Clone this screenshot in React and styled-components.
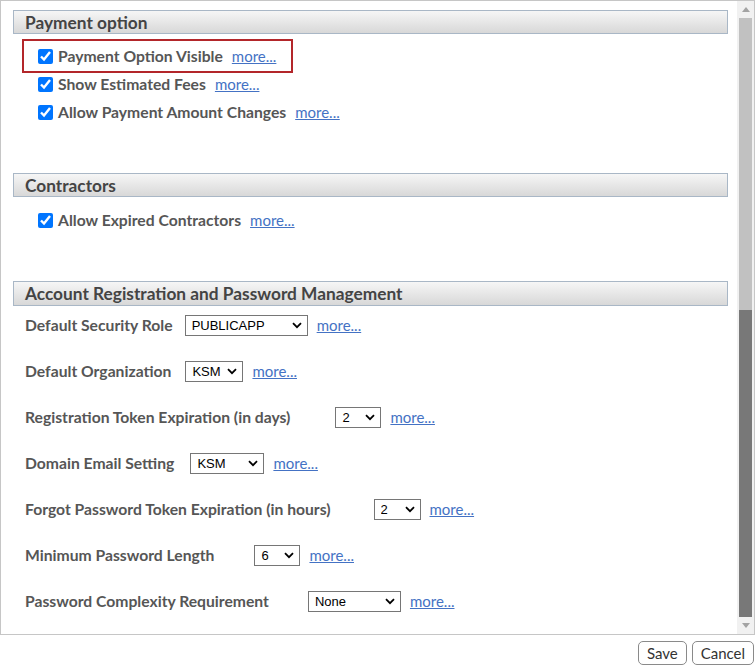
import React from "react";
import styled, { createGlobalStyle } from "styled-components";

const Global = createGlobalStyle`
    html, body {
        margin: 0;
        padding: 0;
        background: #fff;
        font-family: Lato, "Open Sans", sans-serif;
    }
`;

const Page = styled.div`
    width: 755px;
    height: 665px;
    display: flex;
    flex-direction: column;
`;

const Frame = styled.div`
    height: 635px;
    box-sizing: border-box;
    border: 1px solid #c6c6c6;
    display: flex;
    flex-direction: row;
    overflow: hidden;
`;

const Content = styled.div`
    flex: 1;
    padding: 9px 9px 0 12px;
`;

const Section = styled.div`
    margin-bottom: ${(p) => p.gapAfter || 0}px;
`;

const Header = styled.div`
    height: ${(p) => p.h || 24}px;
    box-sizing: border-box;
    border: 1px solid #a9b7c6;
    background: linear-gradient(#f6f6f6, #d8d8d8);
    color: #444;
    font-weight: 700;
    font-size: 17.3px;
    display: flex;
    align-items: center;
    padding-left: 11px;
`;

const CheckList = styled.div`
    padding-top: ${(p) => p.top}px;
    display: flex;
    flex-direction: column;
`;

const CheckRow = styled.div`
    height: 28px;
    display: flex;
    align-items: center;
    padding-left: 25px;
`;

const HighlightRow = styled(CheckRow)`
    box-sizing: border-box;
    height: 34px;
    width: fit-content;
    border: 2px solid #b3262a;
    margin: -3px 0 -3px 9px;
    padding: 0 15px 0 14px;
`;

const Box = styled.input`
    width: 15px;
    height: 15px;
    margin: 0 5px 0 0;
    accent-color: #0075ff;
`;

const Label = styled.span`
    font-size: 15.7px;
    font-weight: 700;
    color: #565656;
`;

const More = styled.a`
    font-size: 15px;
    color: #4472c4;
    text-decoration: underline;
    margin-left: 9px;
    cursor: pointer;
`;

const FieldList = styled.div`
    padding-top: 5px;
    display: flex;
    flex-direction: column;
    gap: 18px;
`;

const FieldRow = styled.div`
    height: 28px;
    display: flex;
    align-items: center;
    padding-left: 12px;
`;

const SelectWrap = styled.span`
    position: relative;
    display: inline-flex;
    margin-left: ${(p) => p.offset}px;
`;

const Select = styled.select`
    appearance: none;
    width: ${(p) => p.w}px;
    height: 21px;
    box-sizing: border-box;
    border: 1px solid #767676;
    border-radius: 0;
    background: #fff;
    font-family: "Liberation Sans", Arial, sans-serif;
    font-size: 13px;
    color: #000;
    padding: 0 0 0 6px;
    outline: none;
`;

const Chevron = styled.svg`
    position: absolute;
    right: 6px;
    top: 7px;
    pointer-events: none;
`;

const Scrollbar = styled.div`
    width: 17px;
    background: #f1f1f1;
    display: flex;
    flex-direction: column;
    align-items: center;
`;

const Arrow = styled.div`
    height: 17px;
    display: flex;
    align-items: center;
    justify-content: center;
`;

const Groove = styled.div`
    flex: 1;
    width: 13px;
    display: flex;
    flex-direction: column;
`;

const GrooveTrack = styled.div`
    height: 292px;
    background: #c1c1c1;
`;

const Thumb = styled.div`
    flex: 1;
    background: #787878;
`;

const Footer = styled.div`
    flex: 1;
    display: flex;
    justify-content: flex-end;
    align-items: flex-start;
    gap: 5px;
    padding: 6px 1px 0 0;
`;

const Button = styled.button`
    height: 24px;
    padding: 0 8px;
    border: 1px solid #8a8a8a;
    border-radius: 5px;
    background: #fff;
    color: #333;
    font-family: Lato, "Open Sans", sans-serif;
    font-size: 15px;
`;

const Check = ({ label, highlight }) => {
    const Row = highlight ? HighlightRow : CheckRow;
    return (
        <Row>
            <Box type="checkbox" defaultChecked />
            <Label>{label}</Label>
            <More>more...</More>
        </Row>
    );
};

const Field = ({ label, offset, width, value }) => (
    <FieldRow>
        <Label>{label}</Label>
        <SelectWrap offset={offset}>
            <Select w={width} defaultValue={value}>
                <option>{value}</option>
            </Select>
            <Chevron width="10" height="7" viewBox="0 0 10 7">
                <path d="M1 1.2 L5 5.2 L9 1.2" fill="none" stroke="#000" strokeWidth="1.8" />
            </Chevron>
        </SelectWrap>
        <More>more...</More>
    </FieldRow>
);

const fields = [
    { label: "Default Security Role", offset: 12, width: 123, value: "PUBLICAPP" },
    { label: "Default Organization", offset: 14, width: 58, value: "KSM" },
    { label: "Registration Token Expiration (in days)", offset: 45, width: 46, value: "2" },
    { label: "Domain Email Setting", offset: 16, width: 74, value: "KSM" },
    { label: "Forgot Password Token Expiration (in hours)", offset: 43, width: 47, value: "2" },
    { label: "Minimum Password Length", offset: 40, width: 46, value: "6" },
    { label: "Password Complexity Requirement", offset: 39, width: 93, value: "None" },
];

export default function App() {
    return (
        <Page>
            <Global />
            <Frame>
                <Content>
                    <Section gapAfter={47}>
                        <Header>Payment option</Header>
                        <CheckList top={8}>
                            <Check label="Payment Option Visible" highlight />
                            <Check label="Show Estimated Fees" />
                            <Check label="Allow Payment Amount Changes" />
                        </CheckList>
                    </Section>
                    <Section gapAfter={47}>
                        <Header>Contractors</Header>
                        <CheckList top={9}>
                            <Check label="Allow Expired Contractors" />
                        </CheckList>
                    </Section>
                    <Section>
                        <Header h={25}>Account Registration and Password Management</Header>
                        <FieldList>
                            {fields.map((f) => (
                                <Field key={f.label} {...f} />
                            ))}
                        </FieldList>
                    </Section>
                </Content>
                <Scrollbar>
                    <Arrow>
                        <svg width="8" height="5" viewBox="0 0 8 5">
                            <path d="M0 5 L4 0 L8 5 Z" fill="#a3a3a3" />
                        </svg>
                    </Arrow>
                    <Groove>
                        <GrooveTrack />
                        <Thumb />
                    </Groove>
                    <Arrow>
                        <svg width="8" height="5" viewBox="0 0 8 5">
                            <path d="M0 0 L8 0 L4 5 Z" fill="#a3a3a3" />
                        </svg>
                    </Arrow>
                </Scrollbar>
            </Frame>
            <Footer>
                <Button>Save</Button>
                <Button>Cancel</Button>
            </Footer>
        </Page>
    );
}
